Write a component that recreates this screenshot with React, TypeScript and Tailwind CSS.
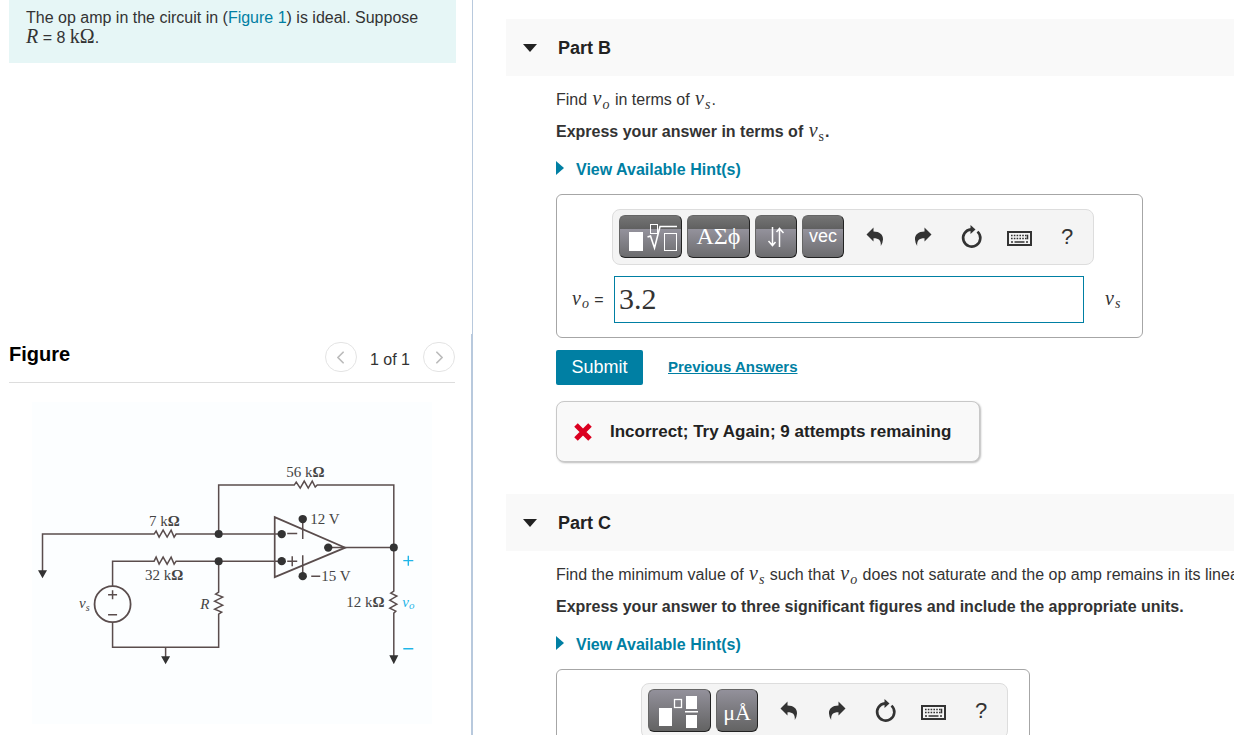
import type { ReactNode } from 'react';
import { ChevronLeft, ChevronRight } from 'lucide-react';

function MathVar({ name, sub, roman }: { name: string; sub: string; roman?: boolean }) {
  return (
    <span className="mx-px font-['Liberation_Serif',serif] font-normal italic text-xl leading-0">
      {name}
      <sub className={`ml-px text-sm ${roman ? 'not-italic' : ''}`}>{sub}</sub>
    </span>
  );
}

function UndoIcon({ flip }: { flip?: boolean }) {
  return (
    <svg width="18" height="20" viewBox="0 0 18 20" fill="#333" className={flip ? '-scale-x-100' : ''}>
      <path d="M0.5 7.5 L7.5 0.5 V4.5 C13.5 4.5 17.3 7.5 17 12.5 Q16.8 16 14.8 19 C15.2 13.5 13.2 11.2 7.5 11.2 V14.5 Z" />
    </svg>
  );
}

function ResetIcon() {
  return (
    <svg width="22" height="24" viewBox="0 0 22 24" fill="none">
      <path d="M17.5 6.6 A8.6 8.6 0 1 1 11 4.4" stroke="#333" strokeWidth="2.6" />
      <path d="M10.5 0 L15.500 4.500 L10.500 9 Z" fill="#333" />
    </svg>
  );
}

function KeyboardIcon() {
  return (
    <svg width="25" height="15" viewBox="0 0 25 15" fill="none" stroke="#333" className="mt-1">
      <rect x="1" y="1" width="23" height="13" strokeWidth="2" />
      <path d="M4 4.5 H20" strokeWidth="1.5" strokeDasharray="1.6 1.2" />
      <path d="M4 7.5 H20" strokeWidth="1.5" strokeDasharray="1.6 1.2" />
      <path d="M20.5 3.7 V8.3" strokeWidth="1.5" />
      <path d="M4 11 H6 M7.5 11 H17.5 M19 11 H21" strokeWidth="1.6" />
    </svg>
  );
}

function PaletteButton({ label, wide, flat, children }: { label: string; wide?: boolean; flat?: boolean; children: ReactNode }) {
  return (
    <button
      aria-label={label}
      className={`h-[43px] shrink-0 flex items-center justify-center rounded-md text-white border border-[#666] border-r-[#222] border-b-[#222] ${
        wide ? 'w-[63px]' : 'w-[42px]'
      } ${flat ? 'bg-linear-to-b from-[#93919b] to-[#636363]' : 'bg-[linear-gradient(#757575,#606060_13px,#94929c_13px,#6c6c6e)]'}`}
    >
      {children}
    </button>
  );
}

function ToolIcons() {
  const tools = [
    { label: 'Undo', icon: <UndoIcon /> },
    { label: 'Redo', icon: <UndoIcon flip /> },
    { label: 'Reset', icon: <ResetIcon /> },
    { label: 'Keyboard shortcuts', icon: <KeyboardIcon /> },
    { label: 'Help', icon: <span className="text-[22px]">?</span> },
  ];
  return (
    <div className="ml-0.5 flex">
      {tools.map((t) => (
        <button key={t.label} aria-label={t.label} className="w-12 h-[43px] flex items-center justify-center text-[#333]">
          {t.icon}
        </button>
      ))}
    </div>
  );
}

function Part({ title, question, instruction, children }: { title: string; question: ReactNode; instruction: ReactNode; children: ReactNode }) {
  return (
    <section>
      <button className="w-full h-[57px] pl-[17px] flex items-center gap-[21px] bg-[#f9f9f9] text-left">
        <svg width="14" height="8" viewBox="0 0 14 8" fill="#222">
          <path d="M0 0 H14 L7 8 Z" />
        </svg>
        <h2 className="text-lg font-bold text-[#222]">{title}</h2>
      </button>
      <div className="pl-[50px] pt-3">
        <p className="h-6 leading-6 whitespace-nowrap">{question}</p>
        <p className="h-6 leading-6 mt-2 font-bold whitespace-nowrap">{instruction}</p>
        <button className="h-6 mt-3.5 flex items-center gap-3 font-bold text-[#007fa3]">
          <svg width="8" height="14" viewBox="0 0 8 14" fill="#007fa3" className="mb-1">
            <path d="M0 0 L8 7 L0 14 Z" />
          </svg>
          View Available Hint(s)
        </button>
        {children}
      </div>
    </section>
  );
}

function Circuit() {
  return (
    <svg viewBox="32 402 400 322" className="w-[85%] ml-8 mt-[19px] bg-[#fcfeff]" role="img" aria-label="Op amp circuit">
      <g fill="none" stroke="#5a4d4d" strokeWidth="1.5">
        {/* wires and resistors */}
        <path d="M42.5 572 V534 H154 l2 -3 l3 6 l4 -7 l4 7 l4 -7 l3 7 l2 -3 H281" />
        <path d="M218.5 534 V485 H294 l2 -3 l4 6 l4 -7 l4 7 l4 -7 l3 6 l2 -2 H393.5 V591 l-3 2 l6 3 l-7 4 l7 4 l-7 4 l6 3 l-2 2 V657" />
        <path d="M112.5 586 V561 H154 l2 -4 l3 7 l4 -7 l4 7 l4 -7 l3 7 l2 -3 H281" />
        <path d="M218.5 561 V592 l-3 2 l7 3 l-8 4 l8 4 l-8 4 l7 3 l-3 2 V647 H112.5 V622" />
        <path d="M165.5 647 V658" />
        <circle cx="112.5" cy="604" r="18" strokeWidth="1.8" />
        <path d="M274.5 517 L345 547.5 L274.5 577 Z" strokeWidth="1.7" />
        <path d="M302.5 519 V539 M302.5 555 V576 M328 547.5 H393" />
        <path d="M108 594.5 h9 M112.5 590 v9 M108 614.5 h9 M287 533.5 h10 M287 561 h10 M292 556 v10 M311 576 h9" />
      </g>
      <g fill="#333">
        <path d="M38 570 h9 l-4.5 8 Z M161 656 h9 l-4.5 8 Z M389 655 h9 l-4.5 9 Z" />
        <circle cx="218.5" cy="534" r="4" />
        <circle cx="218.5" cy="561" r="4" />
        <circle cx="281.5" cy="534" r="4.2" />
        <circle cx="281.5" cy="561" r="4.2" />
        <circle cx="302.5" cy="519" r="4.2" />
        <circle cx="302.5" cy="576" r="4.2" />
        <circle cx="328" cy="547.5" r="4.2" />
        <circle cx="393.5" cy="547.5" r="4" />
      </g>
      <g fill="#444" className="font-['Liberation_Serif',serif] text-[15px]">
        <text x="286" y="477">56 k<tspan fontWeight="bold">Ω</tspan></text>
        <text x="149" y="526">7 k<tspan fontWeight="bold">Ω</tspan></text>
        <text x="145" y="580">32 k<tspan fontWeight="bold">Ω</tspan></text>
        <text x="310" y="524">12 V</text>
        <text x="321" y="581">15 V</text>
        <text x="346" y="607">12 k<tspan fontWeight="bold">Ω</tspan></text>
        <text x="200" y="609" fontStyle="italic">R</text>
        <text x="79" y="608" fontStyle="italic">v<tspan dy="3" fontSize="10">s</tspan></text>
        <text x="402" y="607" fontStyle="italic" fill="#1fb5e8">v<tspan dy="2" fontSize="11">o</tspan></text>
      </g>
      <path d="M403 560.5 h10 M408 555.5 v10 M403 648.5 h10" stroke="#1fb5e8" strokeWidth="1.4" />
    </svg>
  );
}

export default function App() {
  return (
    <div className="h-screen overflow-hidden bg-white grid grid-cols-[472fr_762fr] font-['Liberation_Sans',Arial,sans-serif] text-base text-[#333]">
      <aside className="min-w-0 grid grid-rows-[334fr_401fr]">
        <div className="min-h-0 pl-[9px] pr-4 border-r border-[#b8c9dd] -mr-px">
          <div className="h-[63px] pl-[17px] pt-2 bg-[#e6f6f6] leading-5">
            The op amp in the circuit in (<a href="#figure" className="text-[#007fa3]">Figure 1</a>) is ideal. Suppose
            <br />
            <span className="font-['Liberation_Serif',serif] text-xl leading-0 italic">R</span> = 8{' '}
            <span className="font-['Liberation_Serif',serif] text-xl leading-0">kΩ</span>.
          </div>
        </div>
        <div id="figure" className="min-h-0 pl-[9px] border-r-2 border-[#b8c9dd] -mr-px">
          <div className="h-[49px] mr-4 flex items-center justify-between border-b border-[#ddd]">
            <h2 className="text-xl font-bold text-black pb-2">Figure</h2>
            <div className="flex items-center gap-[13px]">
              <button aria-label="Previous figure" className="w-8 h-[30px] mb-0.5 rounded-full border border-[#e4e4e4] flex items-center justify-center text-[#bbb]">
                <ChevronLeft size={21} />
              </button>
              <span className="pt-1">1 of 1</span>
              <button aria-label="Next figure" className="w-8 h-[30px] mb-0.5 rounded-full border border-[#e4e4e4] flex items-center justify-center text-[#bbb]">
                <ChevronRight size={21} />
              </button>
            </div>
          </div>
          <div className="-ml-[9px]">
            <Circuit />
          </div>
        </div>
      </aside>

      <main className="min-w-0 overflow-hidden pl-[34px] pt-[19px]">
        <Part
          title="Part B"
          question={<>Find <MathVar name="v" sub="o" /> in terms of <MathVar name="v" sub="s" />.</>}
          instruction={<>Express your answer in terms of <MathVar name="v" sub="s" roman />.</>}
        >
          <div className="w-[587px] max-w-full h-36 mt-3 border border-[#a6a6a6] rounded-md">
            <div className="w-[482px] h-14 ml-[55px] mt-3.5 px-1.5 pt-[5px] flex gap-[5px] bg-[#f4f4f4] border border-[#ddd] rounded-lg">
              <PaletteButton label="Templates" wide>
                <svg width="54" height="30" viewBox="0 0 54 30" fill="none" stroke="white">
                  <rect x="5" y="10" width="14" height="19" fill="white" stroke="none" />
                  <path d="M23.500 15 l3 -1 l4 12 L36 4.500 H53" strokeWidth="1.6" />
                  <rect x="26.500" y="2.500" width="7" height="9" />
                  <rect x="40.500" y="11.500" width="12" height="17" />
                </svg>
              </PaletteButton>
              <PaletteButton label="Symbols" wide>
                <span className="font-['Liberation_Serif',serif] text-2xl pb-0.5">ΑΣϕ</span>
              </PaletteButton>
              <PaletteButton label="Arrows">
                <svg width="18" height="20" viewBox="0 0 18 20" fill="none" stroke="white" strokeWidth="1.5">
                  <path d="M5.500 0 V18 M1.500 14 L5.500 18.500 L8.500 15" />
                  <path d="M12.500 20 V2 M9.500 5 L12.500 1.500 L16.500 6" />
                </svg>
              </PaletteButton>
              <PaletteButton label="Vector">
                <span className="text-lg pb-0.5">vec</span>
              </PaletteButton>
              <ToolIcons />
            </div>
            <div className="mt-[11px] ml-3.5 flex items-center">
              <label htmlFor="answer-b" className="w-[43px] shrink-0 whitespace-nowrap"><MathVar name="v" sub="o" /> =</label>
              <input
                id="answer-b"
                defaultValue="3.2"
                className="w-[470px] h-[47px] px-1 pb-0.5 border border-[#007fa3] font-['Liberation_Serif',serif] text-3xl text-[#333]"
              />
              <span className="ml-5"><MathVar name="v" sub="s" /></span>
            </div>
          </div>
          <div className="mt-3 flex items-center gap-[25px]">
            <button className="w-[87px] h-[35px] pb-0.5 rounded-xs bg-[#007fa3] text-lg text-white">Submit</button>
            <a href="#previous" className="text-[15px] font-bold text-[#007fa3] underline">Previous Answers</a>
          </div>
          <div className="w-[424px] h-[61px] mt-4 mb-8 pl-[17px] flex items-center gap-[18px] bg-[#f9f9f9] border border-[#c8c8c8] rounded-lg shadow-[1px_1px_2px_#bbb]">
            <svg width="18" height="18" viewBox="0 0 18 18" stroke="#db0020" strokeWidth="5">
              <path d="M2 2 L16 16 M16 2 L2 16" />
            </svg>
            <span className="text-[17px] font-bold text-[#222]">Incorrect; Try Again; 9 attempts remaining</span>
          </div>
        </Part>

        <Part
          title="Part C"
          question={
            <>
              Find the minimum value of <MathVar name="v" sub="s" /> such that <MathVar name="v" sub="o" /> does not saturate and the op amp remains in its linear region.
            </>
          }
          instruction="Express your answer to three significant figures and include the appropriate units."
        >
          <div className="w-[474px] max-w-full h-36 mt-3 border border-[#a6a6a6] rounded-md">
            <div className="w-[367px] h-14 ml-[84px] mt-[13px] px-1.5 pt-[5px] flex gap-[5px] bg-[#f4f4f4] border border-[#ddd] rounded-lg">
              <PaletteButton label="Templates" wide flat>
                <svg width="44" height="36" viewBox="0 0 44 36" fill="white">
                  <rect x="1" y="15" width="13" height="18" />
                  <rect x="16.5" y="6.5" width="7" height="8" fill="none" stroke="white" strokeWidth="1.3" />
                  <rect x="28" y="3" width="11" height="13" />
                  <rect x="27" y="18" width="13" height="1.5" />
                  <rect x="28" y="22" width="11" height="13" />
                </svg>
              </PaletteButton>
              <PaletteButton label="Units" flat>
                <span className="font-['Liberation_Serif',serif] text-[22px] pt-1">μÅ</span>
              </PaletteButton>
              <ToolIcons />
            </div>
          </div>
        </Part>
      </main>
    </div>
  );
}
